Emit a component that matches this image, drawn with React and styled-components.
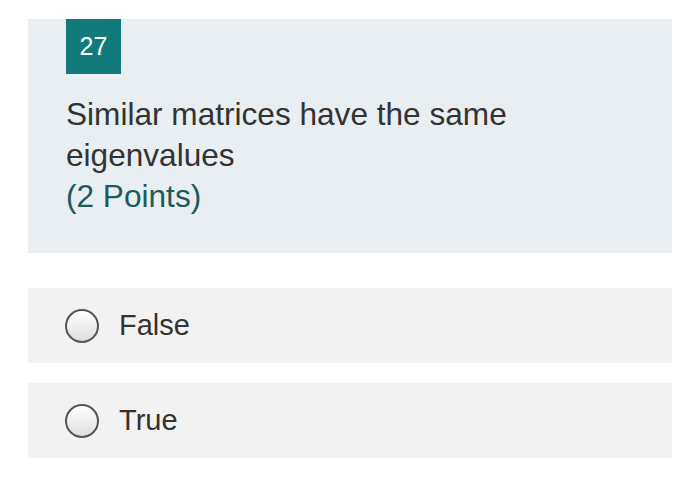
import React from 'react';
import styled, { createGlobalStyle } from 'styled-components';

const GlobalStyle = createGlobalStyle`
  html, body {
    margin: 0;
    padding: 0;
    background: #ffffff;
    font-family: "Liberation Sans", Arial, sans-serif;
  }
`;

const Page = styled.div`
  width: 700px;
  height: 491px;
  padding: 19px 28px 0;
  box-sizing: border-box;
  display: flex;
  flex-direction: column;
`;

const QuestionCard = styled.div`
  background: #e8eef1;
  height: 234px;
  padding: 0 38px;
  box-sizing: border-box;
`;

const Badge = styled.div`
  width: 55px;
  height: 55px;
  background: #137a7b;
  color: #ffffff;
  font-size: 25px;
  display: flex;
  align-items: center;
  justify-content: center;
`;

const Title = styled.div`
  margin-top: 20px;
  font-size: 31.6px;
  line-height: 41px;
  color: #333333;
`;

const Points = styled.div`
  font-size: 31.6px;
  line-height: 41px;
  color: #1d5a5c;
`;

const Options = styled.div`
  margin-top: 35px;
  display: flex;
  flex-direction: column;
  gap: 20px;
`;

const Option = styled.label`
  height: 75px;
  background: #f2f2f2;
  display: flex;
  align-items: center;
  padding-left: 37px;
  gap: 20px;
  font-size: 29px;
  color: #333333;
`;

const Radio = styled.span`
  width: 30px;
  height: 30px;
  border-radius: 50%;
  border: 2px solid #555555;
  background: linear-gradient(#ffffff, #dedede);
  flex-shrink: 0;
`;

export default function App() {
  return (
    <>
      <GlobalStyle />
      <Page>
        <QuestionCard>
          <Badge>27</Badge>
          <Title>Similar matrices have the same<br />eigenvalues</Title>
          <Points>(2 Points)</Points>
        </QuestionCard>
        <Options>
          {['False', 'True'].map((label) => (
            <Option key={label}>
              <Radio />
              {label}
            </Option>
          ))}
        </Options>
      </Page>
    </>
  );
}
